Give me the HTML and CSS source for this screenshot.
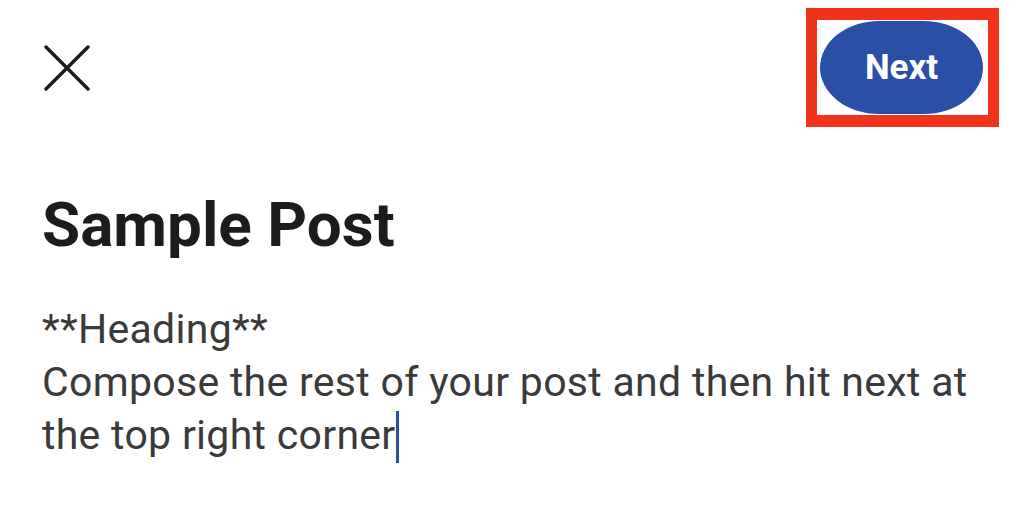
FILE: index.html
```html
<!DOCTYPE html>
<html>
<head>
<meta charset="utf-8">
<link rel="stylesheet" href="styles.css">
</head>
<body>
<div class="page">
  <header class="topbar">
    <button class="close" aria-label="Close">
      <svg width="46" height="46" viewBox="0 0 46 46"><path d="M2 2 L44 44 M44 2 L2 44" stroke="#1a1a1a" stroke-width="3.4" stroke-linecap="round" fill="none"/></svg>
    </button>
    <div class="highlight">
      <button class="next">Next</button>
    </div>
  </header>
  <h1 class="title">Sample Post</h1>
  <div class="body">
    <p>**Heading**</p>
    <p>Compose the rest of your post and then hit next at the top right corner<span class="cursor"></span></p>
  </div>
</div>
</body>
</html>
```
FILE: styles.css
```css
html, body {
  margin: 0;
  padding: 0;
  background: #ffffff;
}
.page {
  width: 1024px;
  height: 514px;
  font-family: Roboto, "Noto Sans", sans-serif;
  overflow: hidden;
}
.topbar {
  display: flex;
  justify-content: space-between;
  align-items: flex-start;
  padding: 8px 25px 0 44px;
}
.close {
  margin-top: 37px;
  padding: 0;
  border: 0;
  background: none;
  width: 46px;
  height: 46px;
}
.close svg { display: block; }
.highlight {
  border: 11px solid #f0331a;
  border-top-width: 12px;
  border-bottom-width: 12px;
  padding: 1px 5px 1px 3px;
}
.next {
  display: block;
  width: 163px;
  height: 93px;
  border: 0;
  border-radius: 60px / 47px;
  background: #2a4fa6;
  color: #ffffff;
  font-family: Roboto, sans-serif;
  font-weight: 700;
  font-size: 35px;
  padding: 0;
}
.title {
  margin: 62px 0 0 42px;
  font-size: 62px;
  font-weight: 700;
  color: #1c1c1c;
  line-height: 72px;
}
.body {
  margin: 42px 0 0 42px;
  width: 960px;
  color: #3a3a3a;
  font-size: 41px;
  letter-spacing: 0.3px;
  line-height: 53px;
}
.body p { margin: 0; }
.cursor {
  display: inline-block;
  width: 3px;
  height: 52px;
  background: #2a4fa6;
  vertical-align: -14px;
}
```
